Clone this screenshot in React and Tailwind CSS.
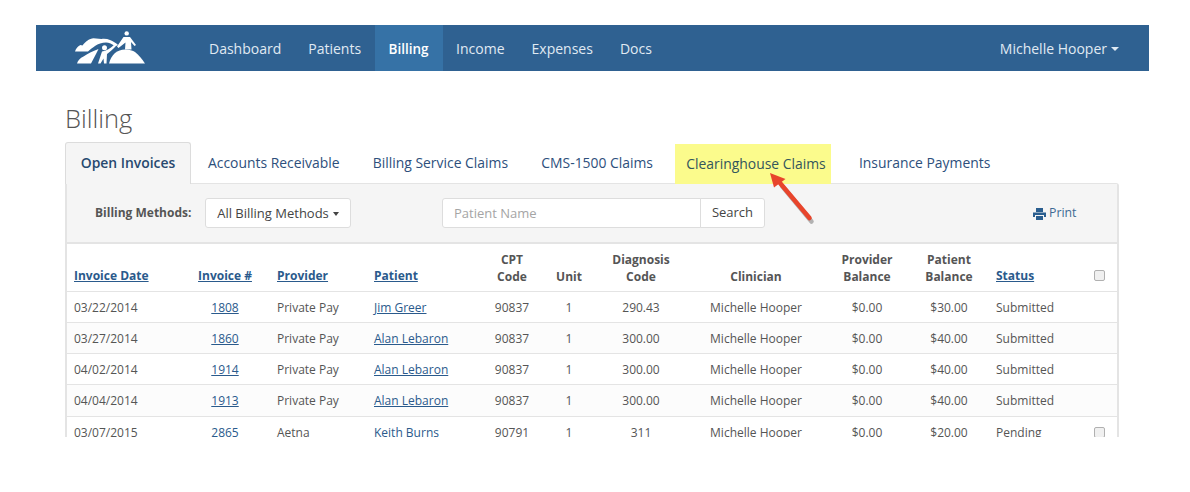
import React from "react";

const navItems = ["Dashboard", "Patients", "Billing", "Income", "Expenses", "Docs"];
const tabs = ["Accounts Receivable", "Billing Service Claims", "CMS-1500 Claims", "Clearinghouse Claims", "Insurance Payments"];

const rows = [
  { date: "03/22/2014", inv: "1808", prov: "Private Pay", patient: "Jim Greer", cpt: "90837", dx: "290.43", pb: "$0.00", bal: "$30.00", status: "Submitted", underline: true },
  { date: "03/27/2014", inv: "1860", prov: "Private Pay", patient: "Alan Lebaron", cpt: "90837", dx: "300.00", pb: "$0.00", bal: "$40.00", status: "Submitted", underline: true },
  { date: "04/02/2014", inv: "1914", prov: "Private Pay", patient: "Alan Lebaron", cpt: "90837", dx: "300.00", pb: "$0.00", bal: "$40.00", status: "Submitted", underline: true },
  { date: "04/04/2014", inv: "1913", prov: "Private Pay", patient: "Alan Lebaron", cpt: "90837", dx: "300.00", pb: "$0.00", bal: "$40.00", status: "Submitted", underline: true },
  { date: "03/07/2015", inv: "2865", prov: "Aetna", patient: "Keith Burns", cpt: "90791", dx: "311", pb: "$0.00", bal: "$20.00", status: "Pending", check: true },
];

const Logo = () => (
  <svg className="ml-px" width="72" height="34" viewBox="0 0 72 34" fill="white">
    {/* standing figure */}
    <circle cx="51.700" cy="2.400" r="2.200" />
    <path d="M48.500 6h6.500l6 8-1.500 1-3.500-4 .5 7.500h-6.500l.5-7-7 5.500-1.500-1.500z" />
    {/* right hill */}
    <path d="M34 32.500c1-4 3-8 6-10.500 3-2 6-3.500 10-3.500 4 0 8 1 10 2.500 4 3 7 7 10 11.500z" />
    {/* cloud */}
    <path d="M0 20.500c1-3 3-5.500 5.500-6.500l2 .5c3-4 7-7 11-7.200l8 .7c3-.5 6 0 8.500 1 3 1 6 3 8 5l-3 1.500c-3-2.500-6-4-9-4-4 0-8 1.500-11 3.500-2 1.500-5 3.500-7 5.500z" />
    {/* lower left slope */}
    <path d="M2 32.500c1-3 3-5.500 6.500-7 4-2.500 9-5.500 15-7.500l-2.500 5-5 9.500z" />
    {/* climber */}
    <circle cx="29.500" cy="16.800" r="2.500" />
    <path d="M27 20.500c4-.5 8-3 12-6.500l1.500 1.500c-3 3-6 6-8.500 7.500l-.5 9.500h-2.500l-.5-5-3 5h-2.500z" />
  </svg>
);

const PrintIcon = () => (
  <svg width="13" height="12" viewBox="0 0 13 12" fill="#2a5e8f">
    <path d="M3 0h7v4H3z" />
    <path d="M0 4.500h13V9h-2V7H2v2H0z" />
    <path d="M3 8h7v4H3z" />
  </svg>
);

const SortHead = ({ children, className = "" }) => (
  <th className={`align-bottom pb-[6px] font-bold text-[#2a5a8c] ${className}`}>
    <span className="underline">{children}</span>
  </th>
);

const Head = ({ children, className = "text-center" }) => (
  <th className={`align-bottom pb-[6px] font-bold leading-[17px] text-[#555555] ${className}`}>{children}</th>
);

const Checkbox = () => (
  <span className="relative left-px mx-auto block h-[11px] w-[11px] rounded-[2px] border border-[#b0b0b0] bg-[#f0f0f0]" />
);

export default function App() {
  return (
    <div className="h-[492px] w-[1190px] overflow-hidden bg-white pt-[25px] font-['Open_Sans',sans-serif] text-[#555555]">
      <div className="ml-[36px] w-[1113px]">
        <nav className="flex h-[46px] items-center bg-[#2f6191] text-[14px] text-[#e0eaf3]">
          <div className="ml-[38px] flex w-[121.500px] items-center">
            <Logo />
          </div>
          {navItems.map((item) => (
            <a
              key={item}
              className={
                item === "Billing"
                  ? "flex h-full w-[68px] items-center justify-center bg-[#3672a6] pt-[2px] text-[13.500px] font-semibold text-white"
                  : "flex h-full items-center px-[13.500px]"
              }
            >
              {item}
            </a>
          ))}
          <div className="ml-auto flex items-center gap-[4px] pr-[30px]">
            Michelle Hooper
            <span className="mt-[2px] border-x-[4px] border-t-[4px] border-x-transparent border-t-[#e0eaf3]" />
          </div>
        </nav>

        <div className="relative ml-[29px] w-[1054px]">
          <h1 className="mt-[28px] h-[43px] text-[25.500px] leading-[38px] font-light text-[#555555]">Billing</h1>

          <div className="relative z-10 -mb-px flex h-[42px] text-[13.900px] text-[#2d4f7c]">
            <div className="flex h-[42px] w-[126px] items-center justify-center rounded-t-[3px] border border-b-0 border-[#dcdcdc] bg-[#f5f5f5] font-semibold text-[#27496f]">
              Open Invoices
            </div>
            <div className="ml-[17px] flex items-center gap-[33.300px]">
              {tabs.map((tab) =>
                tab === "Clearinghouse Claims" ? (
                  <span
                    key={tab}
                    className="-mr-[5px] -ml-[11px] mt-[2px] flex h-[40px] items-center bg-[#fbfb8c] pr-[5px] pl-[11px] text-[#33565c]"
                  >
                    {tab}
                  </span>
                ) : (
                  <span key={tab}>{tab}</span>
                )
              )}
            </div>
          </div>

          <div className="h-[254px] overflow-hidden rounded-tr-[3px] border-x-2 border-t border-[#e4e4e4]">
            <div className="flex h-[60px] items-center border-b-2 border-[#e4e4e4] bg-[#f5f5f5] text-[13px]">
              <span className="mb-[1px] ml-[28px] w-[110px] text-[12px] font-bold text-[#555555]">Billing Methods:</span>
              <button className="flex h-[30px] w-[146px] items-center justify-center gap-[4px] rounded-[3px] border border-[#dddddd] bg-white pt-[2px] text-[13px] text-[#444444]">
                All Billing Methods
                <span className="border-x-[3.500px] border-t-[4px] border-x-transparent border-t-[#444444]" />
              </button>
              <div className="ml-[91px] flex h-[30px] w-[259px] items-center rounded-l-[3px] border border-[#dddddd] bg-white pt-[2px] pl-[11px] text-[13px] text-[#a5a5a5]">
                Patient Name
              </div>
              <button className="-ml-px flex h-[30px] w-[65px] items-center justify-center rounded-r-[3px] border border-[#dddddd] bg-white text-[13px] text-[#444444]">
                Search
              </button>
              <div className="ml-[268px] flex items-center gap-[3px] pt-[1px] text-[12.300px] text-[#3e6a94]">
                <PrintIcon />
                Print
              </div>
            </div>

            <table className="w-[1052px] table-fixed border-collapse text-[12px]">
              <colgroup>
                <col className="w-[113px]" />
                <col className="w-[90px]" />
                <col className="w-[97px]" />
                <col className="w-[115px]" />
                <col className="w-[60px]" />
                <col className="w-[54px]" />
                <col className="w-[90px]" />
                <col className="w-[140px]" />
                <col className="w-[82px]" />
                <col className="w-[82px]" />
                <col className="w-[88px]" />
                <col className="w-[41px]" />
              </colgroup>
              <thead>
                <tr className="h-[47px] border-b border-[#e4e4e4]">
                  <SortHead className="pl-[7px] text-left">Invoice Date</SortHead>
                  <SortHead className="text-center">Invoice #</SortHead>
                  <SortHead className="pl-[7px] text-left">Provider</SortHead>
                  <SortHead className="pl-[7px] text-left">Patient</SortHead>
                  <Head>CPT<br />Code</Head>
                  <Head>Unit</Head>
                  <Head>Diagnosis<br />Code</Head>
                  <Head>Clinician</Head>
                  <Head>Provider<br />Balance</Head>
                  <Head>Patient<br />Balance</Head>
                  <SortHead className="pl-[6px] text-left">Status</SortHead>
                  <th className="align-bottom"><div className="pb-[10px]"><Checkbox /></div></th>
                </tr>
              </thead>
              <tbody>
                {rows.map((row, i) => (
                  <tr key={row.inv} className={`h-[31.250px] border-b border-[#e4e4e4] [&>td]:pt-[2px] ${i % 2 === 1 ? "bg-[#fcfcfc]" : "bg-white"}`}>
                    <td className="pl-[7px]">{row.date}</td>
                    <td className={`text-center text-[#2a5a8c] ${row.underline ? "underline" : ""}`}>{row.inv}</td>
                    <td className="pl-[7px]">{row.prov}</td>
                    <td className={`pl-[7px] text-[#2a5a8c] ${row.underline ? "underline" : ""}`}>{row.patient}</td>
                    <td className="text-center">{row.cpt}</td>
                    <td className="text-center">1</td>
                    <td className="text-center">{row.dx}</td>
                    <td className="text-center">Michelle Hooper</td>
                    <td className="text-center">{row.pb}</td>
                    <td className="text-center">{row.bal}</td>
                    <td className="pl-[6px]">{row.status}</td>
                    <td>{row.check && <Checkbox />}</td>
                  </tr>
                ))}
              </tbody>
            </table>
          </div>

          {/* annotation arrow */}
          <svg className="absolute top-[54px] left-[690px] z-20" width="70" height="72" viewBox="0 0 70 72">
            <path d="M55.500 66.500L26 31" stroke="#00000045" strokeWidth="4.500" strokeLinecap="round" transform="translate(1 2)" fill="none" />
            <path d="M54.500 65L25 30" stroke="#e8452c" strokeWidth="4.500" strokeLinecap="round" fill="none" />
            <path d="M15 20L30.500 26L19 34.500z" fill="#e8452c" />
          </svg>
        </div>
      </div>
    </div>
  );
}
